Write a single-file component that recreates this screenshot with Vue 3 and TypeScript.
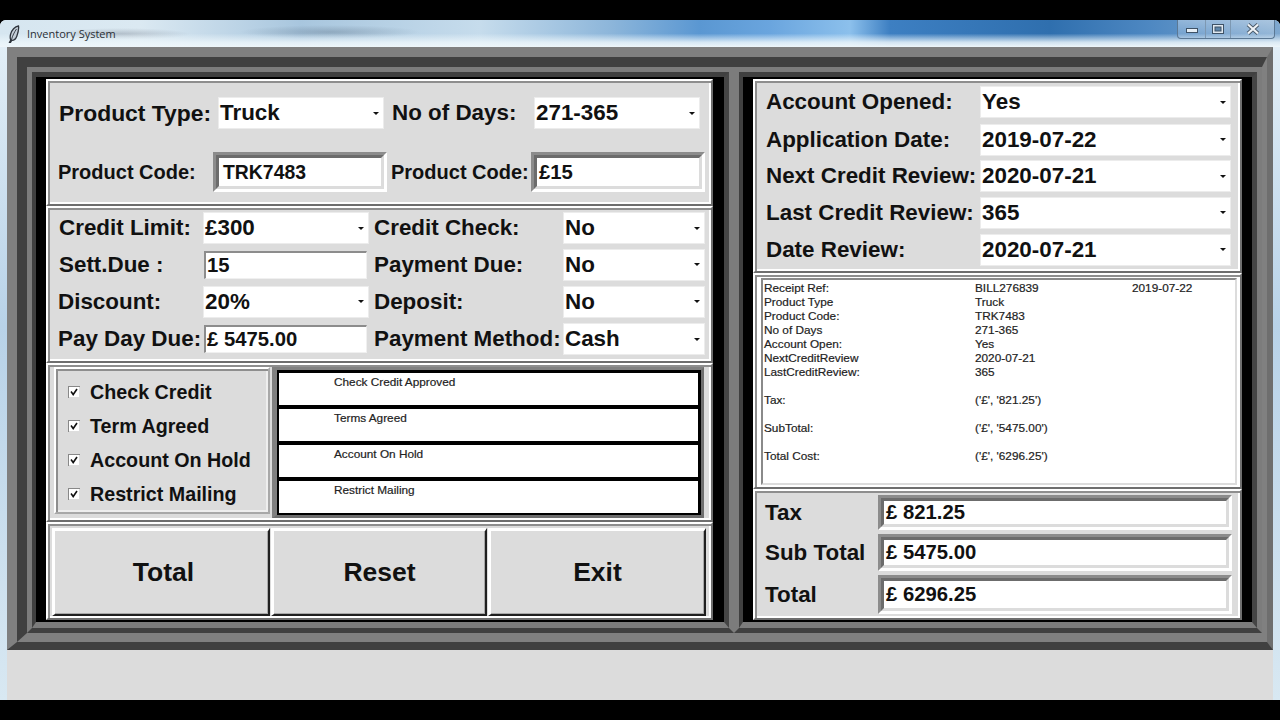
<template>
  <div class="screen">
    <div class="window">
      <!-- Title bar -->
      <div class="titlebar">
        <svg class="feather" viewBox="0 0 12 18" width="12" height="18">
          <path d="M10.500 1C7 1.500 3.500 5 2.500 9.500 2 12 2.200 14 2.800 15L1.500 17.500l.8.3 1.300-2.400c2 .2 4-1.200 5.200-4.200C10 8 11 4 10.500 1z" fill="#c4ced8" stroke="#2e343c" stroke-width="1.300" />
          <path d="M8.500 4C6.500 7 4.500 10.500 3.400 15" stroke="#2e343c" stroke-width=".9" fill="none" />
        </svg>
        <span class="title">Inventory System</span>
        <div class="controls">
          <div class="ctl ctl-min">
            <svg viewBox="0 0 12 8" width="12" height="8"><rect x=".5" y="3.500" width="11" height="4" fill="#e6eef5" stroke="#3e5266" stroke-width="1" /></svg>
          </div>
          <div class="ctl ctl-max">
            <svg viewBox="0 0 12 10" width="12" height="10"><rect x=".5" y=".5" width="11" height="9" fill="#dfe8f0" stroke="#3e5266" stroke-width="1" /><rect x="3" y="3" width="6" height="4" fill="#5f86aa" stroke="#3e5266" stroke-width="1" /></svg>
          </div>
          <div class="ctl ctl-close">
            <svg viewBox="0 0 14 12" width="14" height="12"><path d="M2 1.500l10 9M12 1.500l-10 9" stroke="#4a5a6a" stroke-width="4" /><path d="M2 1.500l10 9M12 1.500l-10 9" stroke="#eef2f6" stroke-width="2.200" /></svg>
          </div>
        </div>
      </div>

      <div class="client">
        <div class="frame-outer">
          <div class="frame-inner">
            <!-- Left column -->
            <div class="col col-left">
              <div class="col-in">
                <div class="stack stack-left">
                  <section class="panel p-product">
                    <div class="p-row p-row1">
                      <label class="lbl lbl-type">Product Type:</label>
                      <div class="combo combo-a"><span>Truck</span><i class="arrow"></i></div>
                      <label class="lbl lbl-days">No of Days:</label>
                      <div class="combo combo-a"><span>271-365</span><i class="arrow"></i></div>
                    </div>
                    <div class="p-row p-row2">
                      <label class="lbl-sm lbl-code1">Product Code:</label>
                      <div class="entry entry-code"><div class="entry-in entry-trk">TRK7483</div></div>
                      <label class="lbl-sm lbl-code2">Product Code:</label>
                      <div class="entry entry-code"><div class="entry-in">£15</div></div>
                    </div>
                  </section>

                  <section class="panel p-credit">
                    <template v-for="row in creditRows" :key="row.left">
                      <label class="lbl" :class="row.leftClass">{{ row.left }}</label>
                      <div v-if="row.combo" class="combo"><span>{{ row.leftValue }}</span><i class="arrow"></i></div>
                      <div v-else class="thin-entry">{{ row.leftValue }}</div>
                      <label class="lbl lbl-r">{{ row.right }}</label>
                      <div class="combo"><span>{{ row.rightValue }}</span><i class="arrow"></i></div>
                    </template>
                  </section>

                  <section class="panel p-checks">
                    <div class="check-frame">
                      <div v-for="c in checks" :key="c" class="check-row">
                        <span class="box">
                          <svg viewBox="0 0 12 12" width="12" height="12"><path d="M3 5.500l2.200 3 3.800-5.500" stroke="#111" stroke-width="1.600" fill="none" /></svg>
                        </span>
                        <span class="check-label">{{ c }}</span>
                      </div>
                    </div>
                    <div class="notes">
                      <div v-for="n in notes" :key="n" class="note">{{ n }}</div>
                    </div>
                  </section>

                  <section class="panel p-buttons">
                    <button class="btn btn-total">Total</button>
                    <button class="btn btn-reset">Reset</button>
                    <button class="btn btn-exit">Exit</button>
                  </section>
                </div>
              </div>
            </div>

            <!-- Right column -->
            <div class="col col-right">
              <div class="col-in">
                <div class="stack stack-right">
                  <section class="panel p-account">
                    <template v-for="row in accountRows" :key="row[0]">
                      <label class="lbl lbl-acc">{{ row[0] }}</label>
                      <div class="combo"><span>{{ row[1] }}</span><i class="arrow"></i></div>
                    </template>
                  </section>

                  <section class="panel p-receipt">
                    <div class="receipt">
                      <template v-for="(line, i) in receipt" :key="i">
                        <span>{{ line[0] }}</span>
                        <span>{{ line[1] }}</span>
                        <span>{{ line[2] }}</span>
                      </template>
                    </div>
                  </section>

                  <section class="panel p-totals">
                    <template v-for="row in totals" :key="row[0]">
                      <label class="lbl lbl-tot">{{ row[0] }}</label>
                      <div class="entry"><div class="entry-in">{{ row[1] }}</div></div>
                    </template>
                  </section>
                </div>
              </div>
            </div>
          </div>
        </div>
        <div class="status"></div>
      </div>
    </div>
  </div>
</template>

<script setup lang="ts">
interface CreditRow {
  left: string;
  leftClass: string;
  leftValue: string;
  combo: boolean;
  right: string;
  rightValue: string;
}

const creditRows: CreditRow[] = [
  { left: 'Credit Limit:', leftClass: 'lbl-l', leftValue: '£300', combo: true, right: 'Credit Check:', rightValue: 'No' },
  { left: 'Sett.Due :', leftClass: 'lbl-l', leftValue: '15', combo: false, right: 'Payment Due:', rightValue: 'No' },
  { left: 'Discount:', leftClass: 'lbl-l2', leftValue: '20%', combo: true, right: 'Deposit:', rightValue: 'No' },
  { left: 'Pay Day Due:', leftClass: 'lbl-l2', leftValue: '£ 5475.00', combo: false, right: 'Payment Method:', rightValue: 'Cash' },
];

const checks = ['Check Credit', 'Term Agreed', 'Account On Hold', 'Restrict Mailing'];
const notes = ['Check Credit Approved', 'Terms Agreed', 'Account On Hold', 'Restrict Mailing'];

const accountRows: [string, string][] = [
  ['Account Opened:', 'Yes'],
  ['Application Date:', '2019-07-22'],
  ['Next Credit Review:', '2020-07-21'],
  ['Last Credit Review:', '365'],
  ['Date Review:', '2020-07-21'],
];

const receipt: [string, string, string][] = [
  ['Receipt Ref:', 'BILL276839', '2019-07-22'],
  ['Product Type', 'Truck', ''],
  ['Product Code:', 'TRK7483', ''],
  ['No of Days', '271-365', ''],
  ['Account Open:', 'Yes', ''],
  ['NextCreditReview', '2020-07-21', ''],
  ['LastCreditReview:', '365', ''],
  ['', '', ''],
  ['Tax:', "('£', '821.25')", ''],
  ['', '', ''],
  ['SubTotal:', "('£', '5475.00')", ''],
  ['', '', ''],
  ['Total Cost:', "('£', '6296.25')", ''],
];

const totals: [string, string][] = [
  ['Tax', '£ 821.25'],
  ['Sub Total', '£ 5475.00'],
  ['Total', '£ 6296.25'],
];
</script>

<style scoped>
.screen {
  width: 1280px;
  height: 720px;
  background: #000;
  padding-top: 20px;
  box-sizing: border-box;
  overflow: hidden;
  font-family: "Liberation Sans", Arial, sans-serif;
  color: #111;
}

.window {
  height: 680px;
  display: flex;
  flex-direction: column;
  border-radius: 6px 6px 0 0;
  overflow: hidden;
  background: linear-gradient(180deg, #e6f1f8 0%, #b8d2e8 45%, #d8e8f2 100%);
}

.titlebar {
  height: 27px;
  flex: none;
  display: flex;
  align-items: center;
  padding-left: 8px;
  box-sizing: border-box;
  background:
    linear-gradient(180deg, rgba(255, 255, 255, 0) 50%, rgba(235, 245, 250, 0.85) 82%, #eef6fa 100%),
    radial-gradient(ellipse 90px 7px at 330px 12px, rgba(90, 110, 130, 0.35), transparent),
    radial-gradient(ellipse 70px 6px at 120px 14px, rgba(100, 110, 125, 0.35), transparent),
    linear-gradient(90deg, #d6e6f0 0, #dbe9f2 140px, #a8c6de 300px, #c6dcec 480px, #8db6da 610px, #5a97d2 700px, #6aa5de 770px, #8cc0ec 850px, #3d7fc2 890px, #2f6fae 1050px, #4e88c2 1150px, #7fa8cf 1280px);
}

.feather {
  flex: none;
  margin-right: 7px;
}

.title {
  font-family: "Open Sans", "Noto Sans", sans-serif;
  font-size: 11px;
  color: #2a2f35;
}

.controls {
  margin-left: auto;
  margin-right: 5px;
  align-self: flex-start;
  display: flex;
  height: 18px;
  border: 1px solid #5b7894;
  border-top: none;
  border-radius: 0 0 4px 4px;
  background: linear-gradient(180deg, rgba(255, 255, 255, 0.35), rgba(255, 255, 255, 0.12));
}

.ctl {
  display: flex;
  align-items: center;
  justify-content: center;
}

.ctl-min {
  width: 27px;
  border-right: 1px solid #7d98b2;
}

.ctl-max {
  width: 24px;
  border-right: 1px solid #7d98b2;
}

.ctl-close {
  width: 43px;
}

.client {
  flex: 1;
  margin: 0 7px;
  display: flex;
  flex-direction: column;
  min-height: 0;
}

.frame-outer {
  height: 603px;
  flex: none;
  box-sizing: border-box;
  border-style: solid;
  border-width: 10px 6px 8px 10px;
  border-color: #808080 #6e6e6e #404040 #808080;
}

.frame-inner {
  height: 100%;
  box-sizing: border-box;
  display: flex;
  border-style: solid;
  border-width: 10px 5px 9px 10px;
  border-color: #404040 #808080 #808080 #404040;
}

.col {
  box-sizing: border-box;
  height: 100%;
  border-style: solid;
  border-width: 5px;
  border-color: #7c7c7c #7c7c7c #404040 #7c7c7c;
}

.col-left {
  width: 707px;
}

.col-right {
  width: 528px;
}

.col-in {
  height: 100%;
  box-sizing: border-box;
  background: #000;
  border-style: solid;
  border-width: 5px 5px 6px 4px;
  border-color: #404040 #454545 #7c7c7c #404040;
  padding: 2px 11px 2px 10px;
}

.col-right .col-in {
  padding: 2px 10px 2px 10px;
  border-left-width: 4px;
}

.stack {
  display: grid;
  height: 541px;
}

.stack-left {
  grid-template-rows: 127px 157px 159px 98px;
}

.stack-right {
  grid-template-rows: 194px 216px 131px;
}

.panel {
  box-sizing: border-box;
  background: #dcdcdc;
  border: 2px solid;
  border-color: #fff #6e6e6e #6e6e6e #fff;
  box-shadow: inset 2px 2px 0 #8e8e8e, inset -2px -2px 0 #fff;
  min-height: 0;
}

.lbl {
  font-size: 22.400px;
  font-weight: 700;
  white-space: nowrap;
}

.lbl-sm {
  font-size: 20px;
  font-weight: 700;
  white-space: nowrap;
}

/* Comboboxes and entries */
.combo {
  height: 32px;
  box-sizing: border-box;
  background: #fff;
  border: 1px solid #ececec;
  display: flex;
  align-items: center;
  padding-left: 1px;
  font-size: 22.400px;
  font-weight: 700;
}

.arrow {
  margin-left: auto;
  margin-right: 4px;
  width: 0;
  height: 0;
  border-left: 3px solid transparent;
  border-right: 3px solid transparent;
  border-top: 3px solid #111;
}

.entry {
  box-sizing: border-box;
  border-style: solid;
  border-width: 3px;
  border-color: #8c8c8c #fff #fff #8c8c8c;
  height: 100%;
}

.entry-in {
  height: 100%;
  box-sizing: border-box;
  border-style: solid;
  border-width: 3px;
  border-color: #6c6c6c #dcdcdc #dcdcdc #6c6c6c;
  background: #fff;
  display: flex;
  align-items: center;
  padding-left: 2px;
  font-size: 20.300px;
  font-weight: 700;
}

.entry-trk {
  padding-left: 4px;
  font-size: 19.400px;
}

.thin-entry {
  height: 28px;
  margin: 0 2px 0 1px;
  box-sizing: border-box;
  background: #fff;
  border-style: solid;
  border-width: 2px 1px 1px 2px;
  border-color: #8c8c8c #f0f0f0 #f0f0f0 #8c8c8c;
  display: flex;
  align-items: center;
  padding-left: 1px;
  font-size: 20.300px;
  font-weight: 600;
}

/* Product panel */
.p-product {
  padding: 16px 0 0 2px;
}

.p-row {
  display: flex;
  align-items: center;
}

.p-row1 {
  height: 32px;
}

.p-row2 {
  height: 40px;
  margin-top: 23px;
}

.lbl-type {
  width: 168px;
  padding-left: 9px;
  box-sizing: border-box;
  font-size: 22.900px;
  flex: none;
}

.lbl-days {
  width: 150px;
  padding-left: 8px;
  box-sizing: border-box;
  flex: none;
}

.combo-a {
  width: 166px;
  flex: none;
}

.lbl-code1 {
  width: 163px;
  padding-left: 8px;
  box-sizing: border-box;
  flex: none;
}

.lbl-code2 {
  width: 144px;
  padding-left: 4px;
  box-sizing: border-box;
  flex: none;
}

.entry-code {
  width: 174px;
  flex: none;
}

/* Credit panel */
.p-credit {
  padding: 2px 0 0 4px;
  display: grid;
  grid-template-columns: 151px 166px 194px 142px;
  grid-template-rows: 36px 37px 37px 38px;
  align-items: center;
}

.lbl-l {
  padding-left: 7px;
}

.lbl-l2 {
  padding-left: 6px;
}

.lbl-r {
  padding-left: 5px;
}

/* Check panel */
.p-checks {
  padding: 2px 0 0 4px;
  display: flex;
  align-items: flex-start;
}

.check-frame {
  width: 216px;
  height: 147px;
  margin-left: 2px;
  box-sizing: border-box;
  background: #dcdcdc;
  border: 2px solid;
  border-color: #fff #a8a8a8 #a8a8a8 #fff;
  box-shadow: inset 2px 2px 0 #8e8e8e, inset -2px -2px 0 #eee;
  padding: 6px 0 0 12px;
  display: grid;
  grid-auto-rows: 34px;
}

.check-row {
  display: flex;
  align-items: center;
  gap: 10px;
}

.box {
  width: 12px;
  height: 12px;
  background: #fff;
  box-sizing: border-box;
  display: flex;
  flex: none;
  box-shadow: inset 1px 1px 0 #888, inset -1px -1px 0 #ddd;
}

.check-label {
  font-size: 19.700px;
  font-weight: 700;
}

.notes {
  width: 432px;
  height: 151px;
  margin-left: 2px;
  box-sizing: border-box;
  border-style: solid;
  border-width: 3px;
  border-color: #808080 #6e6e6e #6e6e6e #808080;
  border-left-width: 5px;
  background: #000;
  padding: 3px 3px 2px 2px;
  display: grid;
  grid-template-rows: repeat(4, 32px);
  row-gap: 4px;
}

.note {
  background: #fff;
  padding: 2px 0 0 55px;
  font-size: 11.800px;
  line-height: 14px;
  color: #222;
  -webkit-text-stroke: 0.2px #222;
}

/* Buttons */
.p-buttons {
  padding: 4px 0 0 4px;
  display: flex;
  gap: 1px;
  align-items: flex-start;
}

.btn {
  height: 88px;
  box-sizing: border-box;
  background: #dcdcdc;
  border-style: solid;
  border-width: 3px 2px 2px 3px;
  border-color: #fff #202020 #202020 #fff;
  box-shadow: inset -1px -1px 0 #a8a8a8;
  font-family: inherit;
  font-size: 26.500px;
  font-weight: 700;
  color: #111;
  padding: 0;
}

.btn-total {
  width: 218px;
  padding-left: 4px;
}

.btn-reset {
  width: 216px;
}

.btn-exit {
  width: 218px;
}

/* Account panel */
.p-account {
  padding: 2px 0 0 2px;
  display: grid;
  grid-template-columns: 223px 251px;
  grid-template-rows: 38px 37px 36px 37px 37px;
  align-items: center;
}

.lbl-acc {
  padding-left: 9px;
}

/* Receipt panel */
.p-receipt {
  background: #fff;
  padding: 3px 3px 2px 6px;
}

.receipt {
  height: 100%;
  box-sizing: border-box;
  background: #fff;
  border-style: solid;
  border-width: 2px;
  border-color: #8a8a8a #dcdcdc #dcdcdc #8a8a8a;
  padding: 1px 0 0 1px;
  display: grid;
  grid-template-columns: 211px 157px 1fr;
  grid-auto-rows: 14px;
  font-size: 11.800px;
  line-height: 14px;
  color: #222;
  -webkit-text-stroke: 0.2px #222;
}

/* Totals panel */
.p-totals {
  padding: 4px 0 0 2px;
  display: grid;
  grid-template-columns: 121px 354px;
  grid-template-rows: 35px 37px 39px;
  row-gap: 4px;
  align-items: center;
}

.lbl-tot {
  padding-left: 8px;
}

.status {
  flex: 1;
  background: #dcdcdc;
}
</style>

<style>
html,
body {
  margin: 0;
  background: #000;
}
</style>
